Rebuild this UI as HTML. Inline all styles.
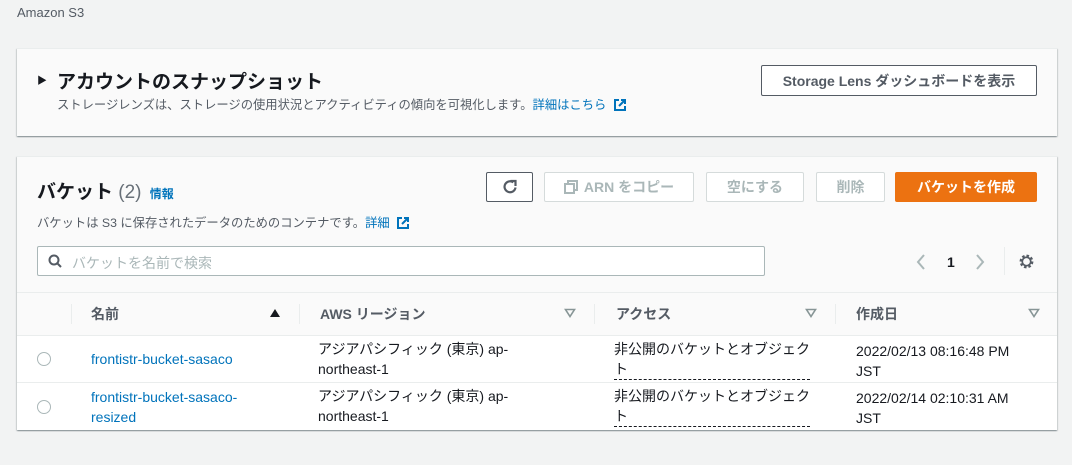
<!DOCTYPE html>
<html><head><meta charset="utf-8"><style>
*{box-sizing:border-box;margin:0;padding:0}
body{width:1072px;height:465px;background:#f2f3f3;font-family:"Liberation Sans","Noto Sans CJK JP",sans-serif;color:#16191f;position:relative;overflow:hidden;font-size:14px}
.abs{position:absolute;white-space:nowrap}
.panel{position:absolute;left:17px;width:1040px;background:#fafafa;box-shadow:0 1px 1px rgba(0,28,36,.3),1px 1px 1px rgba(0,28,36,.12),-1px 1px 1px rgba(0,28,36,.12);border-top:1px solid #eaeded}
.btn{position:absolute;height:30px;border:1px solid #d5dbdb;border-radius:2px;background:#fff;color:#aab7b8;font-weight:bold;font-size:14px;display:flex;align-items:center;justify-content:center}
.link{color:#0073bb}
.th{position:absolute;top:0;height:42px;line-height:42px;font-weight:bold;color:#545b64;font-size:14px}
.sep{position:absolute;top:11px;width:1px;height:20px;background:#eaeded}
.tri{position:absolute;top:15px}
.row{position:absolute;left:0;width:1040px;background:#fff;border-top:1px solid #eaeded}
.radio{position:absolute;left:20px;width:14px;height:14px;border:1px solid #aab7b8;border-radius:50%}
.cell{position:absolute;line-height:20px;font-size:14px}
</style></head><body>
<div class="abs" style="left:17px;top:5px;font-size:13px;color:#545b64">Amazon S3</div>

<div class="panel" style="top:48px;height:88px">
  <div class="abs" style="left:20px;top:23px;font-size:10px">▶</div>
  <div class="abs" style="left:40px;top:18px;font-size:19px;font-weight:bold">アカウントのスナップショット</div>
  <div class="abs" style="left:40px;top:46px;font-size:12.3px;color:#545b64">ストレージレンズは、ストレージの使用状況とアクティビティの傾向を可視化します。<span class="link">詳細はこちら</span>
  <svg width="14" height="14" viewBox="0 0 14 14" style="vertical-align:-3px;margin-left:3px"><path d="M6 2H2v10h10V8M8 2h4v4M12 2L6 8" fill="none" stroke="#0073bb" stroke-width="2"/></svg></div>
  <div class="btn" style="left:744px;top:16px;width:276px;height:31px;border-color:#545b64;color:#545b64">Storage Lens ダッシュボードを表示</div>
</div>

<div class="panel" style="top:156px;height:274px">
  <div class="abs" style="left:20px;top:20px;font-size:19px;font-weight:bold">バケット <span style="font-weight:normal;color:#687078">(2)</span> <span class="link" style="font-size:12px;font-weight:bold;margin-left:3px">情報</span></div>
  <div class="abs" style="left:20px;top:56px;font-size:12.3px;color:#545b64">バケットは S3 に保存されたデータのためのコンテナです。<span class="link">詳細</span>
  <svg width="14" height="14" viewBox="0 0 14 14" style="vertical-align:-3px;margin-left:3px"><path d="M6 2H2v10h10V8M8 2h4v4M12 2L6 8" fill="none" stroke="#0073bb" stroke-width="2"/></svg></div>
  <div class="btn" style="left:469px;top:15px;width:47px;border-color:#545b64;color:#545b64">
    <svg width="20" height="20" viewBox="0 0 20 20"><path d="M15.5 10.5a5.5 5.5 0 1 1-2.2-5.2" fill="none" stroke="#545b64" stroke-width="2.2"/><path d="M10.5 4h5v5" fill="none" stroke="#545b64" stroke-width="2.2"/></svg></div>
  <div class="btn" style="left:527px;top:15px;width:150px"><svg width="14" height="14" viewBox="0 0 14 14" style="margin-right:6px"><path d="M4 4V1h9v9h-3M1 4h9v9H1z" fill="none" stroke="#aab7b8" stroke-width="2"/></svg>ARN をコピー</div>
  <div class="btn" style="left:689px;top:15px;width:98px">空にする</div>
  <div class="btn" style="left:799px;top:15px;width:69px">削除</div>
  <div class="btn" style="left:878px;top:15px;width:142px;background:#ec7211;border-color:#ec7211;color:#fff">バケットを作成</div>

  <div style="position:absolute;left:20px;top:89px;width:728px;height:30px;background:#fff;border:1px solid #aab7b8;border-radius:2px"></div>
  <svg class="abs" style="left:31px;top:97px" width="14" height="14" viewBox="0 0 14 14"><circle cx="6" cy="6" r="4.5" fill="none" stroke="#545b64" stroke-width="2"/><path d="M9 9l4 4" stroke="#545b64" stroke-width="2"/></svg>
  <div class="abs" style="left:55px;top:96px;font-size:14px;color:#aab7b8">バケットを名前で検索</div>
  <svg class="abs" style="left:898px;top:96px" width="12" height="18" viewBox="0 0 12 18"><path d="M9 2L3 9l6 7" fill="none" stroke="#aab7b8" stroke-width="2"/></svg>
  <div class="abs" style="left:930px;top:97px;font-size:14px;font-weight:bold">1</div>
  <svg class="abs" style="left:957px;top:96px" width="12" height="18" viewBox="0 0 12 18"><path d="M3 2l6 7-6 7" fill="none" stroke="#aab7b8" stroke-width="2"/></svg>
  <div style="position:absolute;left:987px;top:90px;width:1px;height:28px;background:#eaeded"></div>
  <svg class="abs" style="left:1001px;top:96px" width="17" height="17" viewBox="0 0 16 16"><circle cx="8" cy="8" r="5" fill="none" stroke="#545b64" stroke-width="3" stroke-dasharray="2.2 1.7"/><circle cx="8" cy="8" r="4" fill="none" stroke="#545b64" stroke-width="1.6"/></svg>

  <div style="position:absolute;left:0;top:135px;width:1040px;height:43px;border-top:1px solid #eaeded">
    <div class="sep" style="left:54px"></div>
    <div class="th" style="left:74px">名前</div>
    <svg class="tri" style="left:252px" width="12" height="10" viewBox="0 0 12 10"><path d="M1 9h10L6 1z" fill="#16191f"/></svg>
    <div class="sep" style="left:282px"></div>
    <div class="th" style="left:303px">AWS リージョン</div>
    <svg class="tri" style="left:547px" width="12" height="10" viewBox="0 0 12 10"><path d="M1.5 1.5h9L6 8.5z" fill="none" stroke="#879596" stroke-width="1.6"/></svg>
    <div class="sep" style="left:577px"></div>
    <div class="th" style="left:599px">アクセス</div>
    <svg class="tri" style="left:788px" width="12" height="10" viewBox="0 0 12 10"><path d="M1.5 1.5h9L6 8.5z" fill="none" stroke="#879596" stroke-width="1.6"/></svg>
    <div class="sep" style="left:818px"></div>
    <div class="th" style="left:839px">作成日</div>
    <svg class="tri" style="left:1011px" width="12" height="10" viewBox="0 0 12 10"><path d="M1.5 1.5h9L6 8.5z" fill="none" stroke="#879596" stroke-width="1.6"/></svg>
  </div>
  <div class="row" style="top:178px;height:47px">
    <div class="radio" style="top:16px"></div>
    <div class="cell link" style="left:74px;top:13px">frontistr-bucket-sasaco</div>
    <div class="cell" style="left:301px;top:3px">アジアパシフィック (東京) ap-<br>northeast-1</div>
    <div class="cell" style="left:597px;top:3px;border-bottom:1px dashed #16191f">非公開のバケットとオブジェク<br>ト</div>
    <div class="cell" style="left:839px;top:5px">2022/02/13 08:16:48 PM<br>JST</div>
  </div>
  <div class="row" style="top:225px;height:48px">
    <div class="radio" style="top:17px"></div>
    <div class="cell link" style="left:74px;top:4px">frontistr-bucket-sasaco-<br>resized</div>
    <div class="cell" style="left:301px;top:3px">アジアパシフィック (東京) ap-<br>northeast-1</div>
    <div class="cell" style="left:597px;top:3px;border-bottom:1px dashed #16191f">非公開のバケットとオブジェク<br>ト</div>
    <div class="cell" style="left:839px;top:5px">2022/02/14 02:10:31 AM<br>JST</div>
  </div>
</div>
</body></html>
